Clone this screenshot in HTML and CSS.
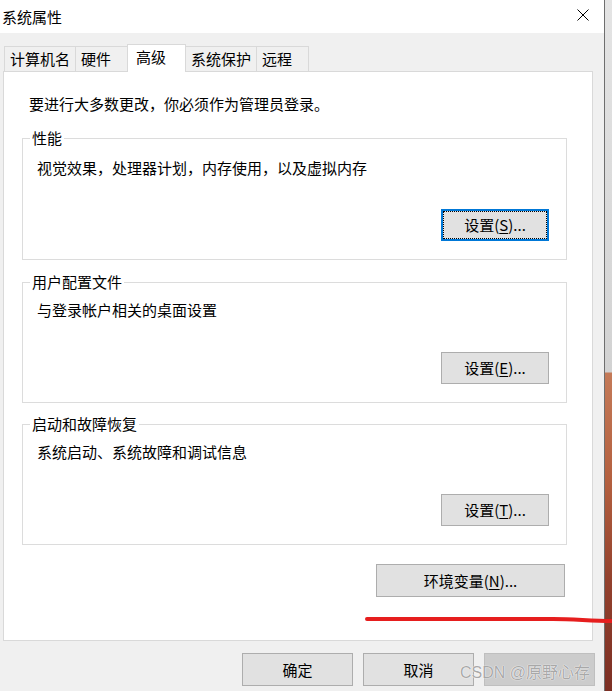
FILE: index.html
```html
<!DOCTYPE html>
<html lang="zh-CN">
<head>
<meta charset="utf-8">
<title>系统属性</title>
<link rel="stylesheet" href="styles.css">
</head>
<body>
<div class="screen">
  <div class="window">
    <div class="titlebar">
      <span class="title">系统属性</span>
      <span class="close" aria-label="关闭">
        <svg width="12" height="12" viewBox="0 0 12 12"><path d="M0.5 0.5 L11.5 11.5 M11.5 0.5 L0.5 11.5" stroke="#000" stroke-width="1" fill="none"/></svg>
      </span>
    </div>
    <div class="body">
      <div class="tabs">
        <div class="tab">计算机名</div>
        <div class="tab">硬件</div>
        <div class="tab active">高级</div>
        <div class="tab">系统保护</div>
        <div class="tab">远程</div>
      </div>
      <div class="panel">
        <p class="intro">要进行大多数更改，你必须作为管理员登录。</p>
        <fieldset class="group g1">
          <legend>性能</legend>
          <p class="desc">视觉效果，处理器计划，内存使用，以及虚拟内存</p>
          <div class="actions"><button class="btn focus">设置(<u>S</u>)...</button></div>
        </fieldset>
        <fieldset class="group g2">
          <legend>用户配置文件</legend>
          <p class="desc">与登录帐户相关的桌面设置</p>
          <div class="actions"><button class="btn">设置(<u>E</u>)...</button></div>
        </fieldset>
        <fieldset class="group g3">
          <legend>启动和故障恢复</legend>
          <p class="desc">系统启动、系统故障和调试信息</p>
          <div class="actions"><button class="btn">设置(<u>T</u>)...</button></div>
        </fieldset>
        <div class="env-row"><button class="btn env">环境变量(<u>N</u>)...</button></div>
      </div>
      <div class="footer">
        <button class="btn wide">确定</button>
        <button class="btn wide">取消</button>
        <button class="btn wide" disabled aria-label="应用"></button>
      </div>
    </div>
  </div>
  <div class="edge"></div>
  <div class="desktop"></div>
  <svg class="annotation" width="612" height="691" viewBox="0 0 612 691">
    <path d="M367 619 L553 619 C575 619 590 621 612 621" stroke="#e61e1e" stroke-width="4" stroke-linecap="round" fill="none"/>
  </svg>
  <div class="watermark">CSDN @原野心存</div>
</div>
</body>
</html>
```

FILE: styles.css
```css
* { box-sizing: border-box; }

html, body {
  margin: 0;
  padding: 0;
}

body {
  width: 612px;
  height: 691px;
  overflow: hidden;
  font-family: "Noto Sans CJK SC", "Noto Sans", sans-serif;
  font-size: 15px;
  color: #000;
}

.screen {
  position: relative;
  display: flex;
  width: 612px;
  height: 691px;
}

.window {
  width: 604px;
  height: 691px;
  display: flex;
  flex-direction: column;
  background: #f0f0f0;
}

.titlebar {
  height: 33px;
  background: #fff;
  display: flex;
  justify-content: space-between;
  align-items: center;
  padding-left: 2px;
}

.title {
  line-height: 20px;
  margin-top: 1px;
}

.close {
  display: flex;
  align-self: flex-start;
  margin-top: 9px;
  margin-right: 15px;
}

.body {
  flex: 1;
  display: flex;
  flex-direction: column;
}

.tabs {
  display: flex;
  align-items: flex-end;
  height: 27px;
  margin-top: 11px;
  margin-left: 4px;
}

.tab {
  height: 25px;
  min-width: 53px;
  padding: 0 5px;
  border: 1px solid #d9d9d9;
  border-bottom: none;
  margin-right: -1px;
  line-height: 23px;
  background: #f0f0f0;
  white-space: nowrap;
}

.tab.active {
  position: relative;
  z-index: 1;
  height: 28px;
  min-width: 59px;
  padding-left: 8px;
  margin-bottom: -1px;
  background: #fff;
}

.panel {
  width: 590px;
  height: 570px;
  margin-left: 3px;
  border: 1px solid #d9d9d9;
  background: #fff;
  padding: 22px 25px 0 18px;
}

.intro {
  margin: 0 0 14px 7px;
  line-height: 20px;
}

.group {
  margin: 0;
  padding: 0 17px 18px 14px;
  border: 1px solid #dcdcdc;
  width: 545px;
}

.group legend {
  margin-left: -7px;
  padding: 0 2px;
  line-height: 20px;
}

.group.g2 { margin-top: 12px; }
.group.g3 { margin-top: 11px; }

.desc {
  margin: 8px 0 0 0;
  line-height: 20px;
}

.g1 .desc { margin-top: 10px; }

.actions {
  display: flex;
  justify-content: flex-end;
  margin-top: 32px;
}

.g1 .actions { margin-top: 31px; }

.btn {
  font-family: "Noto Sans CJK SC", "Noto Sans", sans-serif;
  font-size: 15px;
  color: #000;
  background: #e1e1e1;
  border: 1px solid #adadad;
  height: 32px;
  width: 108px;
  padding: 0;
  line-height: 20px;
  border-radius: 0;
}

.btn u {
  text-decoration-thickness: 1px;
  text-underline-offset: 2px;
}

.btn.focus {
  border: 2px solid #0078d7;
  outline: 1px dotted #000;
  outline-offset: -3px;
}

.env-row {
  display: flex;
  justify-content: flex-end;
  margin-top: 19px;
  margin-right: 2px;
}

.btn.env {
  width: 189px;
  height: 33px;
}

.footer {
  display: flex;
  justify-content: flex-end;
  gap: 10px;
  margin-top: 12px;
  padding-right: 9px;
}

.btn.wide {
  width: 111px;
  height: 33px;
}

.btn[disabled] {
  background: #cccccc;
  border-color: #bfbfbf;
}

.edge {
  width: 1px;
  background: #6e6e6e;
}

.desktop {
  flex: 1;
  background: linear-gradient(to bottom,
    #e4e4e4 0, #d2d2d2 372px,
    #c47a58 373px, #b4603f 480px, #93412d 580px, #7c2f24 691px);
}

.annotation {
  position: absolute;
  left: 0;
  top: 0;
  pointer-events: none;
}

.watermark {
  position: absolute;
  left: 460px;
  top: 661px;
  font-family: "Liberation Sans", "Noto Sans CJK SC", sans-serif;
  font-size: 16px;
  line-height: 24px;
  color: rgba(140, 140, 140, 0.75);
  text-shadow: 0 0 1px #fff, 0 0 1px #fff;
  white-space: nowrap;
}
```
